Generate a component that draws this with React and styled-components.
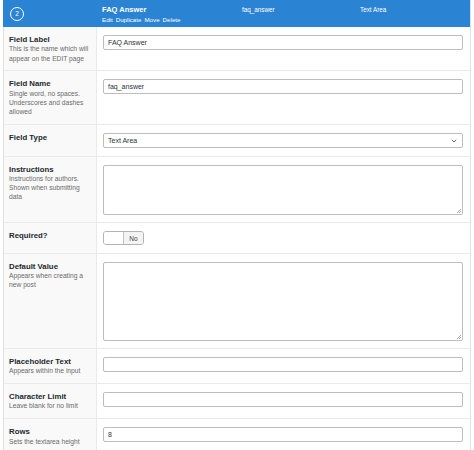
import React from 'react';
import styled, { createGlobalStyle } from 'styled-components';

const GlobalStyle = createGlobalStyle`
  * { box-sizing: border-box; }
  body {
    margin: 0;
    background: #fff;
    font-family: "Liberation Sans", Arial, sans-serif;
    color: #23282d;
  }
`;

const Panel = styled.div`
  width: 468px;
  margin-left: 3px;
  border-right: 1px solid #e2e2e2;
`;

const Header = styled.div`
  display: grid;
  grid-template-columns: 94px 140px 118px 1fr;
  height: 27px;
  background: #2b84d3;
  color: #fff;
`;

const HeadCell = styled.div`
  display: flex;
  flex-direction: column;
  padding: 5px 0 0 5px;
  font-size: ${(p) => (p.$small ? '6.3px' : '7.3px')};
  line-height: 9px;
`;

const Badge = styled.div`
  display: flex;
  align-items: center;
  padding-left: 7px;
`;

const Circle = styled.span`
  width: 14px;
  height: 14px;
  border: 1px solid #fff;
  border-radius: 50%;
  display: flex;
  align-items: center;
  justify-content: center;
  font-size: 6.5px;
`;

const Title = styled.strong`
  font-size: 7.5px;
  line-height: 10px;
`;

const Actions = styled.div`
  display: flex;
  gap: 3px;
  font-size: 6.2px;
  line-height: 9px;
`;

const Body = styled.div`
  border-left: 1px solid #e2e2e2;
`;

const Row = styled.div`
  display: grid;
  grid-template-columns: 93px 1fr;
  border-top: ${(p) => (p.$first ? 'none' : '1px solid #eaeaea')};
`;

const LabelCell = styled.div`
  background: #f9f9f9;
  border-right: 1px solid #eaeaea;
  padding: 8px 5px 7.5px;
  line-height: 9.3px;
`;

const LabelText = styled.div`
  font-weight: bold;
  font-size: 7.8px;
  color: #23282d;
`;

const Desc = styled.div`
  font-size: 6.7px;
  color: #6a6a6a;
  white-space: nowrap;
`;

const InputCell = styled.div`
  padding: 8px 7px 7.5px 6px;
`;

const TextInput = styled.div`
  height: 15px;
  border: 1px solid #bdbdbd;
  border-radius: 2px;
  background: #fff;
  padding-left: 4px;
  display: flex;
  align-items: center;
  font-size: 7px;
  color: #2c3338;
`;

const SelectBox = styled(TextInput)`
  justify-content: space-between;
  padding-right: 5px;
`;

const TextArea = styled.div`
  height: ${(p) => p.$h}px;
  border: 1px solid #bdbdbd;
  border-radius: 2px;
  background-color: #fff;
  background-image: linear-gradient(
    135deg,
    transparent 0 55%,
    #a8a8a8 55% 63%,
    transparent 63% 75%,
    #a8a8a8 75% 83%,
    transparent 83%
  );
  background-size: 5px 5px;
  background-position: right 1px bottom 1px;
  background-repeat: no-repeat;
`;

const Toggle = styled.div`
  display: flex;
  width: 41px;
  height: 14px;
  border: 1px solid #b4b4b4;
  border-radius: 3px;
  overflow: hidden;
  box-shadow: inset 0 1px 1px rgba(0, 0, 0, 0.06);
`;

const Knob = styled.span`
  width: 20px;
  background: #fff;
  border-right: 1px solid #c4c4c4;
`;

const ToggleText = styled.span`
  flex: 1;
  display: flex;
  align-items: center;
  justify-content: center;
  background: #f4f4f4;
  font-size: 6.5px;
  color: #444;
`;

const Chevron = () => (
  <svg width="6" height="4" viewBox="0 0 6 4">
    <path d="M0.8 0.8 L3 3 L5.2 0.8" fill="none" stroke="#555" strokeWidth="0.9" />
  </svg>
);

const rows = [
  { label: 'Field Label', desc: ['This is the name which will', 'appear on the EDIT page'], type: 'input', value: 'FAQ Answer' },
  { label: 'Field Name', desc: ['Single word, no spaces.', 'Underscores and dashes', 'allowed'], type: 'input', value: 'faq_answer' },
  { label: 'Field Type', desc: [], type: 'select', value: 'Text Area' },
  { label: 'Instructions', desc: ['Instructions for authors.', 'Shown when submitting', 'data'], type: 'textarea', h: 50 },
  { label: 'Required?', desc: [], type: 'toggle' },
  { label: 'Default Value', desc: ['Appears when creating a', 'new post'], type: 'textarea', h: 79 },
  { label: 'Placeholder Text', desc: ['Appears within the input'], type: 'input', value: '' },
  { label: 'Character Limit', desc: ['Leave blank for no limit'], type: 'input', value: '' },
  { label: 'Rows', desc: ['Sets the textarea height'], type: 'input', value: '8' },
];

const Control = ({ row }) => {
  if (row.type === 'select') {
    return (
      <SelectBox>
        {row.value}
        <Chevron />
      </SelectBox>
    );
  }
  if (row.type === 'textarea') return <TextArea $h={row.h} />;
  if (row.type === 'toggle') {
    return (
      <Toggle>
        <Knob />
        <ToggleText>No</ToggleText>
      </Toggle>
    );
  }
  return <TextInput>{row.value}</TextInput>;
};

export default function App() {
  return (
    <>
      <GlobalStyle />
      <Panel>
        <Header>
          <Badge>
            <Circle>2</Circle>
          </Badge>
          <HeadCell>
            <Title>FAQ Answer</Title>
            <Actions>
              <span>Edit</span>
              <span>Duplicate</span>
              <span>Move</span>
              <span>Delete</span>
            </Actions>
          </HeadCell>
          <HeadCell $small>faq_answer</HeadCell>
          <HeadCell $small>Text Area</HeadCell>
        </Header>
        <Body>
          {rows.map((row, i) => (
            <Row key={row.label} $first={i === 0}>
              <LabelCell>
                <LabelText>{row.label}</LabelText>
                {row.desc.map((d) => (
                  <Desc key={d}>{d}</Desc>
                ))}
              </LabelCell>
              <InputCell>
                <Control row={row} />
              </InputCell>
            </Row>
          ))}
        </Body>
      </Panel>
    </>
  );
}
